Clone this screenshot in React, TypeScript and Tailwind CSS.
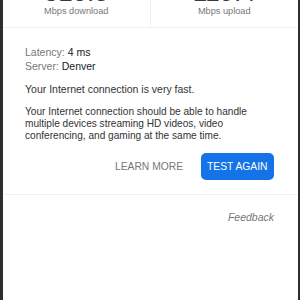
export default function App() {
  const stats = [
    { value: '310.8', label: 'Mbps download' },
    { value: '119.4', label: 'Mbps upload' },
  ];

  return (
    <div className="w-[300px] h-[300px] overflow-hidden bg-[#2e2e2e] pl-[3px] font-['Liberation_Sans',Arial,sans-serif]">
      <div className="w-[295px] h-[340px] -mt-[21px] bg-white">
        {/* Speed results */}
        <div className="grid grid-cols-2 border-b border-[#f1f1f1]">
          {stats.map((s, i) => (
            <div
              key={s.label}
              className={`flex flex-col items-center pb-[10px] ${i === 0 ? 'border-r border-[#f1f1f1]' : ''}`}
            >
              <span className="text-[26px] leading-[26px] text-[#3a3a3a]">{s.value}</span>
              <span className="text-[9.2px] leading-[12px] text-[#777]">{s.label}</span>
            </div>
          ))}
        </div>

        {/* Details */}
        <div className="px-[22px] pt-[16.5px] pb-[14px]">
          <div className="text-[10.5px] leading-[14px]">
            <div>
              <span className="text-[#777]">Latency: </span>
              <span className="text-[#222]">4 ms</span>
            </div>
            <div>
              <span className="text-[#777]">Server: </span>
              <span className="text-[#222]">Denver</span>
            </div>
          </div>
          <p className="mt-[11.5px] text-[10.5px] leading-[11.7px] text-[#333]">
            Your Internet connection is very fast.
          </p>
          <p className="mt-[10.6px] text-[10.1px] leading-[11.7px] text-[#333]">
            Your Internet connection should be able to handle multiple devices streaming HD videos, video
            conferencing, and gaming at the same time.
          </p>
          <div className="mt-[12px] mr-[2px] flex justify-end items-center gap-[11px]">
            <button className="h-[27px] px-[6.5px] text-[10.3px] text-[#777] uppercase">Learn more</button>
            <button className="h-[27px] px-[6.5px] rounded-[5px] bg-[#1473e6] text-[10.3px] text-white uppercase">
              Test again
            </button>
          </div>
        </div>

        {/* Footer */}
        <div className="border-t border-[#f1f1f1] pt-[16px] pr-[24px] flex justify-end">
          <span className="italic text-[10.5px] leading-[12px] text-[#777]">Feedback</span>
        </div>
      </div>
    </div>
  );
}
